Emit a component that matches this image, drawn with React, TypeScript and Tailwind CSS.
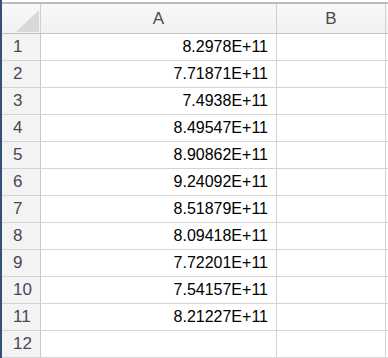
const values = [
  "8.2978E+11",
  "7.71871E+11",
  "7.4938E+11",
  "8.49547E+11",
  "8.90862E+11",
  "9.24092E+11",
  "8.51879E+11",
  "8.09418E+11",
  "7.72201E+11",
  "7.54157E+11",
  "8.21227E+11",
  "",
];

export default function App() {
  return (
    <div
      className="w-[388px] h-[358px] bg-white border-l-2 border-[#34507a] overflow-hidden"
      style={{ fontFamily: '"Liberation Sans", Arial, sans-serif' }}
    >
      {/* formula bar remnant */}
      <div className="h-[2px] bg-white" />
      <div className="h-[2px] bg-[#bdbdbd]" />

      {/* column headers */}
      <div className="flex h-[30px] border-b border-[#c4c4c4] bg-gradient-to-b from-[#f8f8f8] to-[#f1f1f1]">
        <div className="w-[39px] border-r border-[#d0d0d0] relative">
          <svg className="absolute left-[14px] top-[6px]" width="23" height="22" viewBox="0 0 23 22">
            <polygon points="23,0 23,22 0,22" fill="#d8d8d8" />
          </svg>
        </div>
        <div className="w-[236px] border-r border-[#d0d0d0] flex items-center justify-center text-[17px] text-[#4a4a4a]">
          A
        </div>
        <div className="w-[109px] border-r border-[#d0d0d0] flex items-center justify-center text-[17px] text-[#4a4a4a]">
          B
        </div>
      </div>

      {/* rows */}
      {values.map((v, i) => (
        <div key={i} className="flex h-[27px] border-b border-[#d4d4d4]">
          <div className="w-[39px] border-r border-[#c8c8c8] bg-[#f3f3f3] pl-[11px] flex items-center text-[17px] text-[#474756]">
            {i + 1}
          </div>
          <div className="w-[236px] border-r border-[#d4d4d4] flex items-center justify-end pr-[8px] text-[16px] text-black">
            {v}
          </div>
          <div className="w-[109px] border-r border-[#d4d4d4]" />
        </div>
      ))}
    </div>
  );
}
